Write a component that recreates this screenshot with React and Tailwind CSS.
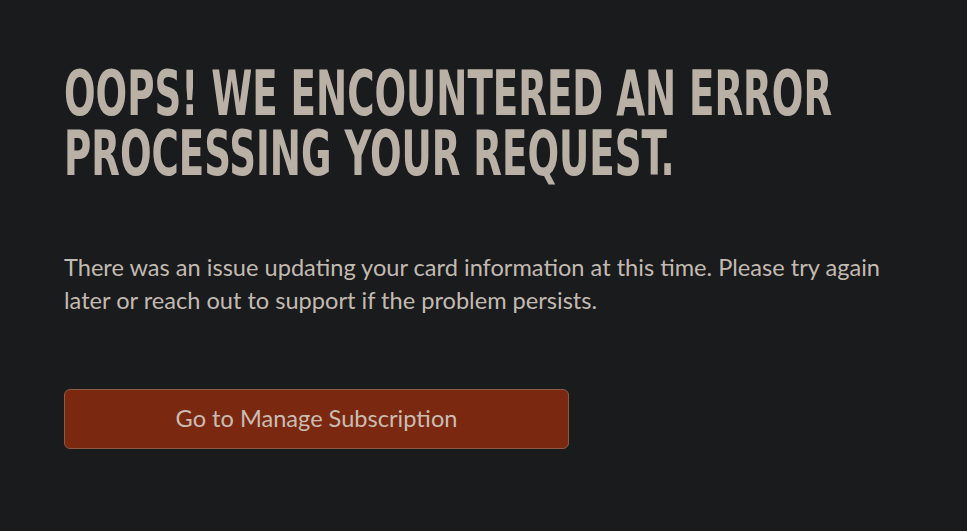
export default function App() {
  return (
    <div className="min-h-screen w-full bg-[#1a1b1d] text-[#bcb3aa]">
      <div className="pl-[64px] pt-[64px] pr-[64px]">
        <h1 className="text-[62px] leading-[60px] font-bold uppercase text-[#b9b0a6] [font-family:'DejaVu_Sans_Condensed','DejaVu_Sans',sans-serif]">
          <span className="block origin-left scale-x-[0.667] whitespace-nowrap">Oops! We encountered an error</span>
          <span className="block origin-left scale-x-[0.667] whitespace-nowrap">processing your request.</span>
        </h1>
        <p className="mt-[67px] text-[23.6px] leading-[33px] text-[#c2bab1] [font-family:Lato,sans-serif]">
          There was an issue updating your card information at this time. Please try again
          <br />
          later or reach out to support if the problem persists.
        </p>
        <button className="mt-[72px] flex h-[60px] w-[505px] items-center justify-center rounded-[6px] border border-[#8a5b47] bg-[#7b2810] text-[23.6px] text-[#c9bdb3] [font-family:Lato,sans-serif]">
          Go to Manage Subscription
        </button>
      </div>
    </div>
  );
}
